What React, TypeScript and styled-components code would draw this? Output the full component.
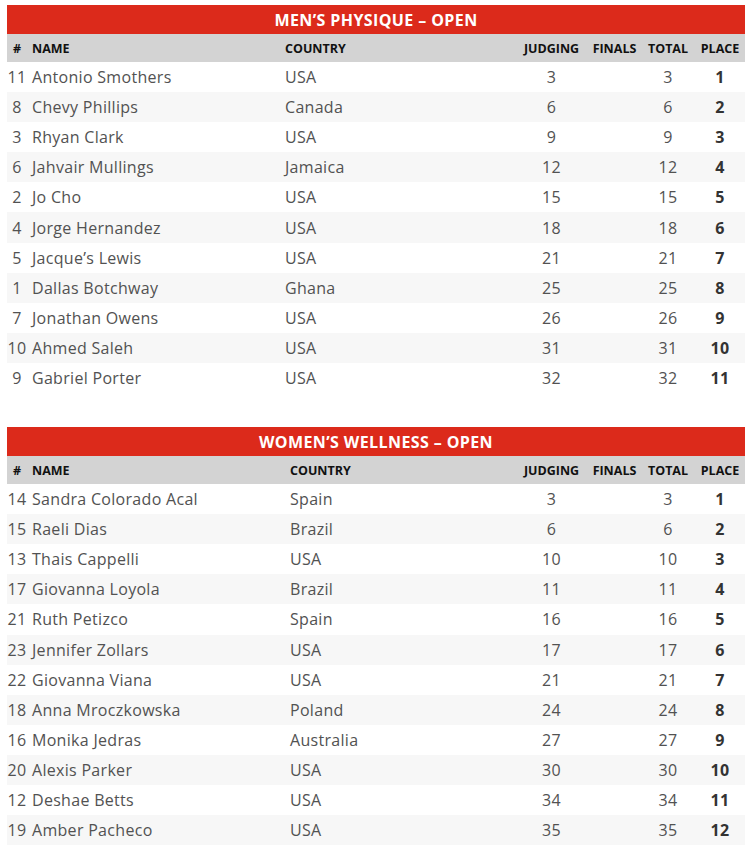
import React from 'react';
import styled, { createGlobalStyle } from 'styled-components';

const GlobalStyle = createGlobalStyle`
  body {
    margin: 0;
    background: #fff;
    font-family: "Open Sans", "Liberation Sans", sans-serif;
  }
`;

type Row = [number, string, string, number, number, number];

const physique: Row[] = [
  [11, 'Antonio Smothers', 'USA', 3, 3, 1],
  [8, 'Chevy Phillips', 'Canada', 6, 6, 2],
  [3, 'Rhyan Clark', 'USA', 9, 9, 3],
  [6, 'Jahvair Mullings', 'Jamaica', 12, 12, 4],
  [2, 'Jo Cho', 'USA', 15, 15, 5],
  [4, 'Jorge Hernandez', 'USA', 18, 18, 6],
  [5, 'Jacque’s Lewis', 'USA', 21, 21, 7],
  [1, 'Dallas Botchway', 'Ghana', 25, 25, 8],
  [7, 'Jonathan Owens', 'USA', 26, 26, 9],
  [10, 'Ahmed Saleh', 'USA', 31, 31, 10],
  [9, 'Gabriel Porter', 'USA', 32, 32, 11],
];

const wellness: Row[] = [
  [14, 'Sandra Colorado Acal', 'Spain', 3, 3, 1],
  [15, 'Raeli Dias', 'Brazil', 6, 6, 2],
  [13, 'Thais Cappelli', 'USA', 10, 10, 3],
  [17, 'Giovanna Loyola', 'Brazil', 11, 11, 4],
  [21, 'Ruth Petizco', 'Spain', 16, 16, 5],
  [23, 'Jennifer Zollars', 'USA', 17, 17, 6],
  [22, 'Giovanna Viana', 'USA', 21, 21, 7],
  [18, 'Anna Mroczkowska', 'Poland', 24, 24, 8],
  [16, 'Monika Jedras', 'Australia', 27, 27, 9],
  [20, 'Alexis Parker', 'USA', 30, 30, 10],
  [12, 'Deshae Betts', 'USA', 34, 34, 11],
  [19, 'Amber Pacheco', 'USA', 35, 35, 12],
];

const Page = styled.div`
  padding: 5px 5px 0 7px;
  display: flex;
  flex-direction: column;
  gap: 34px;
`;

const Table = styled.section<{ $nameW: number }>`
  width: 738px;
  display: grid;
  grid-template-columns: 20px ${(p) => p.$nameW}px 1fr 73px 53px 54px 50px;
`;

const Title = styled.div`
  grid-column: 1 / -1;
  height: 29px;
  background: #dc2a1b;
  color: #fff;
  font-weight: 700;
  font-size: 16px;
  letter-spacing: 0.4px;
  display: flex;
  align-items: center;
  justify-content: center;
  text-transform: uppercase;
`;

const HeadRow = styled.div`
  grid-column: 1 / -1;
  display: grid;
  grid-template-columns: subgrid;
  height: 28px;
  background: #d3d3d3;
  color: #111;
  font-weight: 700;
  font-size: 12.5px;
`;

const BodyRow = styled.div<{ $striped: boolean }>`
  grid-column: 1 / -1;
  display: grid;
  grid-template-columns: subgrid;
  height: 30.1px;
  background: ${(p) => (p.$striped ? '#f7f7f7' : '#fff')};
  color: #525252;
  font-size: 16px;
  letter-spacing: 0.3px;
`;

const Cell = styled.div<{ $align?: 'left' | 'center'; $bold?: boolean }>`
  display: flex;
  align-items: center;
  justify-content: ${(p) => (p.$align === 'center' ? 'center' : 'flex-start')};
  padding-left: ${(p) => (p.$align === 'center' ? '0' : '5px')};
  font-weight: ${(p) => (p.$bold ? 700 : 'inherit')};
  color: ${(p) => (p.$bold ? '#333' : 'inherit')};
  white-space: nowrap;
`;

const NumCell = styled(Cell)`
  padding-left: 0;
  justify-content: center;
`;

const Results = ({ title, rows, nameW }: { title: string; rows: Row[]; nameW: number }) => (
  <Table $nameW={nameW}>
    <Title>{title}</Title>
    <HeadRow>
      <NumCell>#</NumCell>
      <Cell>NAME</Cell>
      <Cell>COUNTRY</Cell>
      <Cell $align="center">JUDGING</Cell>
      <Cell $align="center">FINALS</Cell>
      <Cell $align="center">TOTAL</Cell>
      <Cell $align="center">PLACE</Cell>
    </HeadRow>
    {rows.map(([num, name, country, judging, total, place], i) => (
      <BodyRow key={num} $striped={i % 2 === 1}>
        <NumCell>{num}</NumCell>
        <Cell>{name}</Cell>
        <Cell>{country}</Cell>
        <Cell $align="center">{judging}</Cell>
        <Cell $align="center"></Cell>
        <Cell $align="center">{total}</Cell>
        <Cell $align="center" $bold>
          {place}
        </Cell>
      </BodyRow>
    ))}
  </Table>
);

const App = () => (
  <>
    <GlobalStyle />
    <Page>
      <Results title="Men’s Physique – Open" rows={physique} nameW={253} />
      <Results title="Women’s Wellness – Open" rows={wellness} nameW={258} />
    </Page>
  </>
);

export default App;
